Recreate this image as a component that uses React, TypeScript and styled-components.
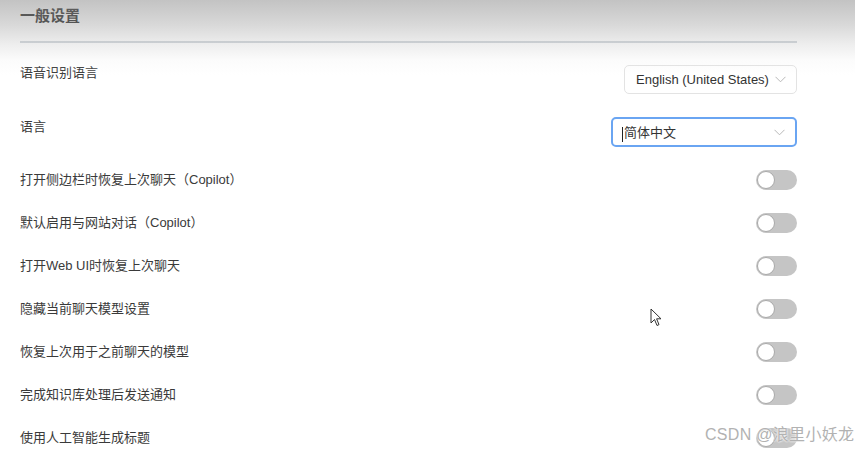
import React from "react";
import styled, { createGlobalStyle } from "styled-components";

const Global = createGlobalStyle`
  html, body { margin: 0; padding: 0; background: #fff; }
  body { font-family: "Liberation Sans", "Noto Sans CJK SC", sans-serif; color: #333; }
`;

const Page = styled.div`
  position: relative;
  width: 855px;
  height: 450px;
  overflow: hidden;
  background: #fff;
`;

const Content = styled.div`
  padding: 0 58px 0 20px;
  display: flex;
  flex-direction: column;
`;

const Title = styled.h1`
  margin: 0;
  height: 41px;
  box-sizing: border-box;
  padding-top: 6px;
  font-size: 15px;
  line-height: 20px;
  font-weight: 700;
  color: #0a0a0a;
`;

const Divider = styled.div`
  height: 2px;
  background: #cdd3d8;
`;

const Row = styled.div<{ $h: number; $mt: number; $center?: boolean }>`
  display: flex;
  justify-content: space-between;
  align-items: ${(p) => (p.$center ? "center" : "flex-start")};
  height: ${(p) => p.$h}px;
  margin-top: ${(p) => p.$mt}px;
`;

const Label = styled.span<{ $pt?: number }>`
  font-size: 13px;
  line-height: 16px;
  color: #3a3a3a;
  padding-top: ${(p) => p.$pt ?? 0}px;
`;

const Select = styled.div<{ $w: number; $focus?: boolean }>`
  box-sizing: border-box;
  width: ${(p) => p.$w}px;
  height: 100%;
  display: flex;
  align-items: center;
  justify-content: space-between;
  padding: 0 10px 0 ${(p) => (p.$focus ? 9 : 11)}px;
  border: ${(p) => (p.$focus ? "2px solid #6aa5f2" : "1px solid #e3e3e3")};
  border-radius: 5px;
  font-size: 13px;
  color: #333;
  background: #fff;
`;

const Caret = styled.span`
  display: inline-block;
  width: 1px;
  height: 15px;
  background: #222;
  margin-right: 1px;
  vertical-align: middle;
`;

const Toggle = styled.div`
  position: relative;
  width: 41px;
  height: 20px;
  border-radius: 10px;
  background: #c5c5c5;
  flex: none;
`;

const Knob = styled.div`
  position: absolute;
  left: 1px;
  top: 1px;
  width: 16px;
  height: 16px;
  border-radius: 50%;
  background: #fff;
  border: 1px solid #a9a9a9;
`;

const Shade = styled.div`
  position: absolute;
  left: 0;
  top: 0;
  right: 0;
  height: 75px;
  pointer-events: none;
  background: linear-gradient(
    to bottom,
    rgba(155, 155, 155, 0.6) 0px,
    rgba(170, 170, 170, 0.45) 25px,
    rgba(200, 200, 200, 0.3) 45px,
    rgba(230, 230, 230, 0.15) 60px,
    rgba(255, 255, 255, 0) 75px
  );
`;

const Watermark = styled.div`
  position: absolute;
  left: 705px;
  top: 425px;
  font-size: 16px;
  line-height: 20px;
  letter-spacing: 0.3px;
  color: #b2b2b2;
  text-shadow: 0 0 2px #fff, 0 0 2px #fff;
  pointer-events: none;
  white-space: nowrap;
`;

const Cursor = styled.svg`
  position: absolute;
  left: 650px;
  top: 308px;
`;

const Chevron = () => (
  <svg width="11" height="7" viewBox="0 0 11 7">
    <path d="M0.5 0.8 L5.5 5.8 L10.5 0.8" fill="none" stroke="#b8b8b8" strokeWidth="1" />
  </svg>
);

const toggles = [
  "打开侧边栏时恢复上次聊天（Copilot）",
  "默认启用与网站对话（Copilot）",
  "打开Web UI时恢复上次聊天",
  "隐藏当前聊天模型设置",
  "恢复上次用于之前聊天的模型",
  "完成知识库处理后发送通知",
  "使用人工智能生成标题",
];

export default function App() {
  return (
    <Page>
      <Global />
      <Content>
        <Title>一般设置</Title>
        <Divider />
        <Row $h={29} $mt={22}>
          <Label $pt={0}>语音识别语言</Label>
          <Select $w={173}>
            <span>English (United States)</span>
            <Chevron />
          </Select>
        </Row>
        <Row $h={30} $mt={23}>
          <Label $pt={2}>语言</Label>
          <Select $w={186} $focus>
            <span>
              <Caret />
              简体中文
            </span>
            <Chevron />
          </Select>
        </Row>
        {toggles.map((t, i) => (
          <Row key={t} $h={43} $mt={i === 0 ? 11 : 0} $center>
            <Label>{t}</Label>
            <Toggle>
              <Knob />
            </Toggle>
          </Row>
        ))}
      </Content>
      <Shade />
      <Cursor width="12" height="19" viewBox="0 0 12 19">
        <path d="M1 1 L1 15 L4.5 11.5 L7 17.5 L9 16.6 L6.6 10.8 L11 10.8 Z" fill="#fff" stroke="#333" strokeWidth="1" />
      </Cursor>
      <Watermark>CSDN @浪里小妖龙</Watermark>
    </Page>
  );
}
